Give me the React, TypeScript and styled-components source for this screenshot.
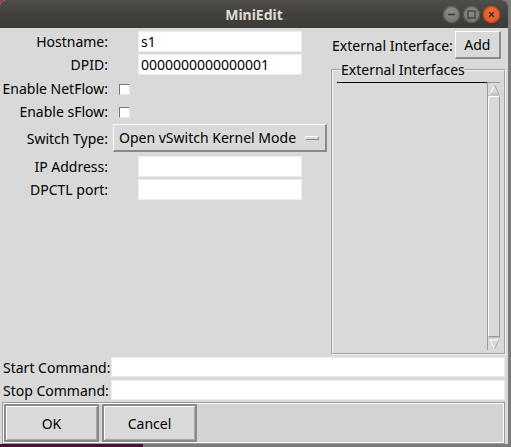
import styled, { createGlobalStyle } from "styled-components";

const GlobalStyle = createGlobalStyle`
    html, body {
        margin: 0;
        padding: 0;
    }
    body {
        width: 511px;
        height: 447px;
        overflow: hidden;
        background:
            linear-gradient(135deg, #a8305a 0px, #a8305a 6px, transparent 6px),
            linear-gradient(90deg, #4a1232 0px, #4a1232 143px, #7b7b7b 143px);
        font-family: "Noto Sans", "Open Sans", sans-serif;
        font-size: 14px;
        color: #000;
    }
`;

const leftRows = [
    { label: "Hostname:", kind: "entry", value: "s1" },
    { label: "DPID:", kind: "entry", value: "0000000000000001" },
    { label: "Enable NetFlow:", kind: "check" },
    { label: "Enable sFlow:", kind: "check" },
    { label: "Switch Type:", kind: "menu", value: "Open vSwitch Kernel Mode" },
    { label: "IP Address:", kind: "entry", value: "" },
    { label: "DPCTL port:", kind: "entry", value: "" },
];

const commands = ["Start Command:", "Stop Command:"];

const ArrowUp = () => (
    <svg width="11" height="11" viewBox="0 0 11 11">
        <polygon points="5.5,1 10,10 1,10" fill="#d9d9d9" stroke="#ffffff" strokeWidth="1" />
        <line x1="10" y1="10" x2="1" y2="10" stroke="#9a9a9a" strokeWidth="1" />
        <line x1="5.5" y1="1" x2="10" y2="10" stroke="#9a9a9a" strokeWidth="1" />
    </svg>
);

const ArrowDown = () => (
    <svg width="11" height="11" viewBox="0 0 11 11">
        <polygon points="1,1 10,1 5.5,10" fill="#d9d9d9" stroke="#ffffff" strokeWidth="1" />
        <line x1="10" y1="1" x2="5.5" y2="10" stroke="#9a9a9a" strokeWidth="1" />
    </svg>
);

export default function App() {
    return (
        <>
            <GlobalStyle />
            <Window>
                <TitleBar>
                    <span />
                    <Title>MiniEdit</Title>
                    <WinButtons>
                        <WinButton>
                            <svg width="9" height="9" viewBox="0 0 9 9">
                                <line x1="1" y1="4.5" x2="8" y2="4.5" stroke="#3a3a38" strokeWidth="1.3" />
                            </svg>
                        </WinButton>
                        <WinButton>
                            <svg width="9" height="9" viewBox="0 0 9 9">
                                <rect x="1" y="1" width="7" height="7" fill="none" stroke="#3a3a38" strokeWidth="1.2" />
                            </svg>
                        </WinButton>
                        <WinButton $close>
                            <svg width="9" height="9" viewBox="0 0 9 9">
                                <path d="M2 2 L7 7 M7 2 L2 7" stroke="#3b2a22" strokeWidth="1.4" />
                            </svg>
                        </WinButton>
                    </WinButtons>
                </TitleBar>

                <Body>
                    <Main>
                        <LeftPanel>
                            {leftRows.map((row) => (
                                <Row key={row.label}>
                                    <Label>{row.label}</Label>
                                    {row.kind === "entry" && <Entry>{row.value}</Entry>}
                                    {row.kind === "check" && <CheckBox />}
                                    {row.kind === "menu" && (
                                        <MenuButton>
                                            <span>{row.value}</span>
                                            <Indicator />
                                        </MenuButton>
                                    )}
                                </Row>
                            ))}
                        </LeftPanel>

                        <RightPanel>
                            <TopRow>
                                <span>External Interface:</span>
                                <AddButton>Add</AddButton>
                            </TopRow>
                            <Group>
                                <Legend>External Interfaces</Legend>
                                <ListArea>
                                    <ListBox />
                                    <ScrollBar>
                                        <ScrollArrow><ArrowUp /></ScrollArrow>
                                        <Slider />
                                        <ScrollArrow><ArrowDown /></ScrollArrow>
                                    </ScrollBar>
                                </ListArea>
                            </Group>
                        </RightPanel>
                    </Main>

                    <Commands>
                        {commands.map((c) => (
                            <CommandRow key={c}>
                                <CommandLabel>{c}</CommandLabel>
                                <CommandEntry />
                            </CommandRow>
                        ))}
                    </Commands>

                    <ButtonBar>
                        <DialogButton>OK</DialogButton>
                        <DialogButton>Cancel</DialogButton>
                    </ButtonBar>
                </Body>
            </Window>
        </>
    );
}

const Window = styled.div`
    width: 508px;
    height: 444px;
    display: flex;
    flex-direction: column;
    border-radius: 6px 6px 0 0;
    overflow: hidden;
    background: #d9d9d9;
`;

const TitleBar = styled.div`
    height: 28px;
    flex: none;
    display: grid;
    grid-template-columns: 1fr auto 1fr;
    align-items: center;
    background: linear-gradient(#4f4e4a, #403f3b 60%, #3c3b37);
`;

const Title = styled.div`
    font-family: "Noto Sans", "Open Sans", sans-serif;
    font-weight: bold;
    font-size: 14px;
    color: #dfdbd2;
    padding-top: 1px;
`;

const WinButtons = styled.div`
    justify-self: end;
    display: flex;
    gap: 3px;
    margin-right: 8px;
    padding-top: 1px;
`;

const WinButton = styled.div<{ $close?: boolean }>`
    width: 17px;
    height: 17px;
    border-radius: 50%;
    display: flex;
    align-items: center;
    justify-content: center;
    background: ${(p) =>
        p.$close
            ? "radial-gradient(circle at 50% 35%, #f26d3d, #e0501c)"
            : "radial-gradient(circle at 50% 35%, #8e8d88, #6f6e69)"};
    box-shadow: inset 0 0 0 1px ${(p) => (p.$close ? "#c2461a" : "#5a5955")};
`;

const Body = styled.div`
    flex: 1;
    display: flex;
    flex-direction: column;
    background: #d9d9d9;
`;

const Main = styled.div`
    height: 328px;
    display: flex;
`;

const LeftPanel = styled.div`
    width: 330px;
    flex: none;
    padding-top: 2px;
    display: grid;
    grid-template-columns: 110px 220px;
    grid-template-rows: 23px 23px 24px 22px 32px 25px 20px;
    align-content: start;
`;

const Row = styled.div`
    display: contents;
`;

const Label = styled.div`
    align-self: center;
    text-align: right;
    padding-right: 2px;
    white-space: nowrap;
`;

const Entry = styled.div`
    align-self: center;
    justify-self: center;
    width: 164px;
    height: 21px;
    box-sizing: border-box;
    background: #ffffff;
    border: 1px solid #ececec;
    padding-left: 2px;
    line-height: 19px;
`;

const CheckBox = styled.div`
    align-self: center;
    justify-self: start;
    margin-left: 9px;
    margin-top: 2px;
    width: 11px;
    height: 11px;
    box-sizing: border-box;
    background: #ffffff;
    border-top: 1px solid #777;
    border-left: 1px solid #777;
    border-right: 1px solid #e8e8e8;
    border-bottom: 1px solid #e8e8e8;
`;

const MenuButton = styled.div`
    align-self: center;
    justify-self: center;
    width: 214px;
    height: 28px;
    box-sizing: border-box;
    display: flex;
    align-items: center;
    justify-content: space-between;
    padding: 0 6px 0 5px;
    background: #d9d9d9;
    border-top: 1px solid #ffffff;
    border-left: 1px solid #ffffff;
    border-right: 2px solid #8a8a8a;
    border-bottom: 2px solid #8a8a8a;
`;

const Indicator = styled.div`
    width: 14px;
    height: 4px;
    box-sizing: border-box;
    background: #d9d9d9;
    border-top: 1px solid #ffffff;
    border-left: 1px solid #ffffff;
    border-right: 1px solid #8a8a8a;
    border-bottom: 1px solid #8a8a8a;
    margin-top: 1px;
`;

const RightPanel = styled.div`
    flex: 1;
    display: flex;
    flex-direction: column;
    padding: 3px 2px 1px 1px;
`;

const TopRow = styled.div`
    display: flex;
    align-items: center;
    gap: 2px;
    padding-left: 1px;
    height: 28px;
`;

const AddButton = styled.div`
    width: 46px;
    height: 28px;
    box-sizing: border-box;
    display: flex;
    align-items: center;
    justify-content: center;
    border-top: 1px solid #ffffff;
    border-left: 1px solid #ffffff;
    border-right: 2px solid #8a8a8a;
    border-bottom: 2px solid #8a8a8a;
`;

const Group = styled.fieldset`
    flex: 1;
    margin: 3px 0 0 0;
    padding: 4px 4px 3px 4px;
    border: 2px groove #f4f4f4;
    min-width: 0;
    display: flex;
`;

const Legend = styled.legend`
    padding: 0;
    margin-left: 4px;
    line-height: 16px;
`;

const ListArea = styled.div`
    flex: 1;
    display: flex;
    height: 100%;
`;

const ListBox = styled.div`
    flex: 1;
    border-top: 1px solid #000;
    background: #d9d9d9;
`;

const ScrollBar = styled.div`
    width: 13px;
    display: flex;
    flex-direction: column;
    background: #c3c3c3;
    border-top: 1px solid #9a9a9a;
    border-left: 1px solid #9a9a9a;
    box-sizing: border-box;
`;

const ScrollArrow = styled.div`
    height: 12px;
    display: flex;
    align-items: center;
    justify-content: center;
    background: #d9d9d9;
`;

const Slider = styled.div`
    flex: 1;
    background: #d9d9d9;
    border-top: 1px solid #ffffff;
    border-left: 1px solid #ffffff;
    border-right: 1px solid #9a9a9a;
    border-bottom: 1px solid #9a9a9a;
    margin: 1px 0;
`;

const Commands = styled.div`
    display: flex;
    flex-direction: column;
    gap: 3px;
    padding: 1px 3px 0 3px;
`;

const CommandRow = styled.div`
    display: grid;
    grid-template-columns: 108px 1fr;
    align-items: center;
    height: 20px;
`;

const CommandLabel = styled.div`
    white-space: nowrap;
`;

const CommandEntry = styled.div`
    height: 20px;
    box-sizing: border-box;
    background: #ffffff;
    border: 1px solid #ececec;
`;

const ButtonBar = styled.div`
    margin: 2px 3px 0 2px;
    height: 42px;
    box-sizing: border-box;
    display: flex;
    gap: 3px;
    padding: 1px;
    background: #d3d3d3;
    border: 1px solid #999;
    box-shadow: inset 1px 1px 0 #ffffff, inset -1px -1px 0 #ffffff;
`;

const DialogButton = styled.div`
    width: 95px;
    height: 38px;
    box-sizing: border-box;
    display: flex;
    align-items: center;
    justify-content: center;
    background: #d9d9d9;
    border: 2px solid #8a8a8a;
    box-shadow: inset 1px 1px 0 #ffffff, inset -1px -1px 0 #a5a5a5;
`;
